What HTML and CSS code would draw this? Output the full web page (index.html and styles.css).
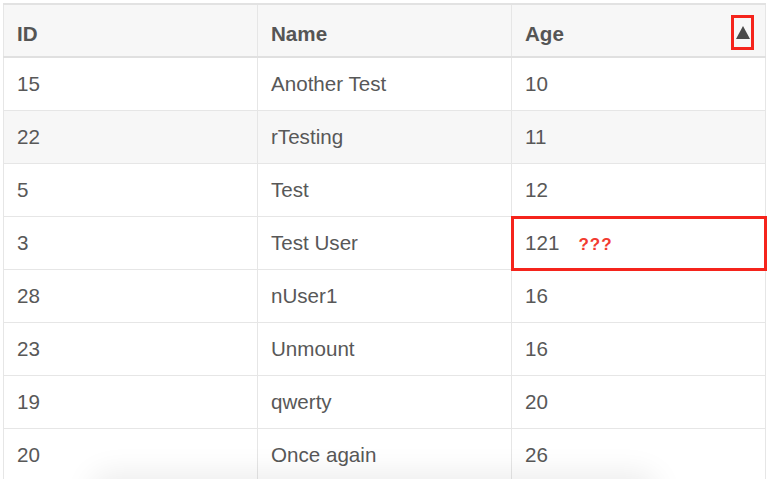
FILE: index.html
```html
<!DOCTYPE html>
<html>
<head>
<meta charset="utf-8">
<link rel="stylesheet" href="styles.css">
</head>
<body>
<div class="wrap">
<table class="grid">
  <thead>
    <tr>
      <th class="c1">ID</th>
      <th class="c2">Name</th>
      <th class="c3"><div class="hcell"><span>Age</span><span class="sort"><span class="tri"></span></span></div></th>
    </tr>
  </thead>
  <tbody>
    <tr><td>15</td><td>Another Test</td><td>10</td></tr>
    <tr class="alt"><td>22</td><td>rTesting</td><td>11</td></tr>
    <tr><td>5</td><td>Test</td><td>12</td></tr>
    <tr><td>3</td><td>Test User</td><td class="flag">121<span class="q">???</span></td></tr>
    <tr><td>28</td><td>nUser1</td><td>16</td></tr>
    <tr><td>23</td><td>Unmount</td><td>16</td></tr>
    <tr><td>19</td><td>qwerty</td><td>20</td></tr>
    <tr><td>20</td><td>Once again</td><td>26</td></tr>
  </tbody>
</table>
<div class="smear"></div>
</div>
</body>
</html>
```
FILE: styles.css
```css
html, body {
  margin: 0;
  padding: 0;
  background: #ffffff;
  overflow: hidden;
}
.wrap {
  padding: 3px 2px 0 3px;
  position: relative;
  height: 476px;
}
.grid {
  border-collapse: collapse;
  width: 763px;
  table-layout: fixed;
  font-family: "Liberation Sans", Arial, sans-serif;
  font-size: 20.6px;
  color: #585858;
  border: 1px solid #dcdcdc;
  border-top: 2px solid #e2e2e2;
}
.grid th, .grid td {
  text-align: left;
  padding: 0 14px 0 13px;
  height: 52px;
  border: 1px solid #e6e6e6;
  vertical-align: middle;
}
.grid th {
  background: #f7f7f7;
  font-weight: bold;
  color: #555555;
  border-bottom: 2px solid #e0e0e0;
  height: 45px;
  padding-top: 6px;
  padding-bottom: 0;
}
.grid th.c1 { width: 226px; }
.grid th.c2 { width: 226px; }
.hcell {
  display: flex;
  align-items: center;
  justify-content: space-between;
}
.sort {
  width: 17px;
  height: 29px;
  border: 3px solid #f5241c;
  display: flex;
  align-items: center;
  justify-content: center;
  margin-right: -3px;
  margin-top: -3px;
}
.tri {
  width: 0;
  height: 0;
  border-left: 7px solid transparent;
  border-right: 7px solid transparent;
  border-bottom: 13px solid #4a4a4a;
}
.grid tr.alt td {
  background: #f7f7f7;
}
.grid td.flag {
  outline: 3px solid #f5241c;
  outline-offset: -2px;
}
.q {
  color: #f23b30;
  font-weight: bold;
  font-size: 17px;
  margin-left: 19px;
  letter-spacing: 1px;
}
.smear {
  position: absolute;
  left: 90px;
  right: 110px;
  bottom: -40px;
  height: 40px;
  box-shadow: 0 -6px 30px rgba(0,0,0,0.08);
  border-radius: 40px;
}
```
